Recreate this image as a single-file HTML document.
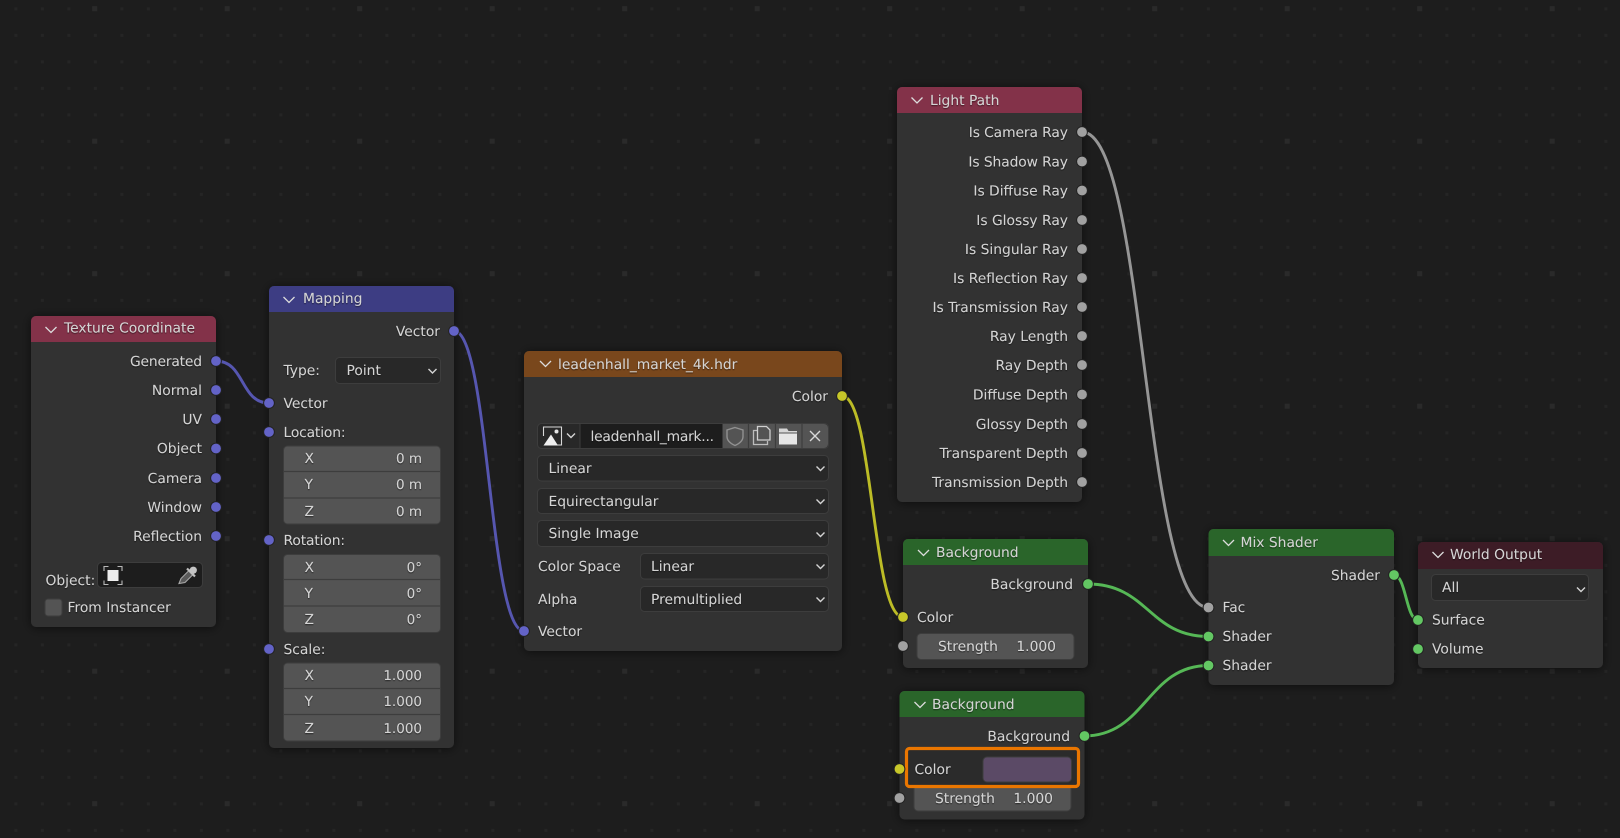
<!DOCTYPE html>
<html><head><meta charset="utf-8"><title>Shader nodes</title>
<style>
html,body{margin:0;padding:0;background:#1d1d1d;width:1620px;height:838px;overflow:hidden}
svg{display:block;position:absolute;left:0;top:0}
text{font-family:"DejaVu Sans","Liberation Sans",sans-serif;font-size:13.85px;fill:#d4d4d4;text-rendering:geometricPrecision}
.e{text-anchor:end}
.m{font-size:13.5px}
.n{filter:url(#sh)}
.b{fill:#303030}
.f{fill:#545454;stroke:#3d3d3d;stroke-width:1}
.d{fill:#282828;stroke:#3d3d3d;stroke-width:1}
.l{stroke:#3d3d3d;stroke-width:1.2;fill:none}
.c{fill:none;stroke:#dcdcdc;stroke-width:1.3}
.c2{fill:none;stroke:#d4d4d4;stroke-width:1.4}
.w{fill:none;stroke-width:2.9}
.v{fill:#6363c7;stroke:#222;stroke-width:1}
.y{fill:#c7c729;stroke:#222;stroke-width:1}
.g{fill:#63c763;stroke:#222;stroke-width:1}
.a{fill:#a1a1a1;stroke:#222;stroke-width:1}
</style></head><body>
<svg width="1620" height="838" viewBox="0 0 1620 838" xmlns="http://www.w3.org/2000/svg">
<defs>
<filter id="sh" x="-20%" y="-20%" width="140%" height="140%"><feDropShadow dx="0" dy="1" stdDeviation="5" flood-color="#000" flood-opacity=".55"/></filter>
<filter id="ts" x="-5%" y="-5%" width="110%" height="110%"><feDropShadow dx="0" dy="1" stdDeviation=".6" flood-color="#000" flood-opacity=".55"/></filter>
<pattern id="s" patternUnits="userSpaceOnUse" width="26.5" height="26.5" patternTransform="translate(14.4 7.4)"><rect x="0" y="0" width="3" height="3" fill="#252525"/></pattern>
<pattern id="L" patternUnits="userSpaceOnUse" width="132.5" height="132.5" patternTransform="translate(92.2 6.2)"><rect x="0" y="0" width="5" height="5" fill="#2a2a2a"/></pattern>
</defs>
<rect width="1620" height="838" fill="#1d1d1d"/>
<rect width="1620" height="838" fill="url(#s)"/>
<rect width="1620" height="838" fill="url(#L)"/>

<!-- nodes -->
<g class="n"><rect class="b" x="31" y="316" width="185" height="311" rx="5"/><path fill="#83314a" d="M31 342V321a5 5 0 0 1 5-5H211a5 5 0 0 1 5 5V342Z"/></g>
<g class="n"><rect class="b" x="269" y="286" width="185" height="462" rx="5"/><path fill="#3c3c83" d="M269 312V291a5 5 0 0 1 5-5H449a5 5 0 0 1 5 5V312Z"/></g>
<g class="n"><rect class="b" x="524" y="351" width="318" height="300" rx="5"/><path fill="#79461d" d="M524 377V356a5 5 0 0 1 5-5H837a5 5 0 0 1 5 5V377Z"/></g>
<g class="n"><rect class="b" x="897" y="87" width="185" height="415" rx="5"/><path fill="#83314a" d="M897 113V92a5 5 0 0 1 5-5H1077a5 5 0 0 1 5 5V113Z"/></g>
<g class="n"><rect class="b" x="903" y="539" width="185" height="129" rx="5"/><path fill="#2b652b" d="M903 565V544a5 5 0 0 1 5-5H1083a5 5 0 0 1 5 5V565Z"/></g>
<g class="n"><rect class="b" x="899.500" y="691" width="185" height="128.500" rx="5"/><path fill="#2b652b" d="M899.500 717V696a5 5 0 0 1 5-5H1079.500a5 5 0 0 1 5 5V717Z"/></g>
<g class="n"><rect class="b" x="1208.500" y="529" width="185.500" height="156" rx="5"/><path fill="#2b652b" d="M1208.500 556V534a5 5 0 0 1 5-5H1389a5 5 0 0 1 5 5V556Z"/></g>
<g class="n"><rect class="b" x="1418" y="542" width="185" height="126" rx="5"/><path fill="#3c1d26" d="M1418 569V547a5 5 0 0 1 5-5H1598a5 5 0 0 1 5 5V569Z"/></g>

<!-- wires -->
<g class="w">
<path stroke="#5656b0" d="M216 361C245 361 240 403 269 403"/>
<path stroke="#5656b0" d="M454 331C489 331 489 631 524 631"/>
<path stroke="#bcbc26" d="M842 396C873 396 872 617 903 617"/>
<path stroke="#969696" d="M1082 132C1146 132 1143 607.500 1208.500 607.500"/>
<path stroke="#56b856" d="M1088 584C1148 584 1149 636.500 1208.500 636.500"/>
<path stroke="#56b856" d="M1084 736C1146 736 1147 665.500 1208.500 665.500"/>
<path stroke="#56b856" d="M1394 575C1406 575 1406 620 1418 620"/>
</g>

<!-- fields -->
<rect class="d" x="335.500" y="357.500" width="105" height="26" rx="4"/>
<rect class="f" x="283.500" y="446" width="157" height="78" rx="4"/><path class="l" d="M283 471.500H441M283 498H441"/>
<rect class="f" x="283.500" y="554.500" width="157" height="78" rx="4"/><path class="l" d="M283 579.500H441M283 606H441"/>
<rect class="f" x="283.500" y="663" width="157" height="78" rx="4"/><path class="l" d="M283 688.500H441M283 714.500H441"/>
<rect class="d" x="97.500" y="562.500" width="105" height="25" rx="4" style="fill:#1d1d1d"/>
<rect class="f" x="45" y="599" width="17" height="17" rx="3"/>

<!-- image row -->
<rect x="537.500" y="423.500" width="291" height="25" rx="4" fill="#282828" stroke="#3d3d3d"/>
<rect x="580" y="424" width="143" height="24" fill="#1d1d1d"/>
<path d="M580 424V448" stroke="#3d3d3d"/>
<path d="M722.500 424H824a4 4 0 0 1 4 4V444a4 4 0 0 1-4 4H722.500Z" fill="#545454"/>
<path d="M748.500 424V448M775.500 424V448M802 424V448" stroke="#3d3d3d" stroke-width="1.2"/>
<rect class="d" x="537.500" y="455.500" width="291" height="25.500" rx="4"/>
<rect class="d" x="537.500" y="488.500" width="291" height="25" rx="4"/>
<rect class="d" x="537.500" y="520.500" width="291" height="26" rx="4"/>
<rect class="d" x="640.500" y="553.500" width="188" height="25.500" rx="4"/>
<rect class="d" x="640.500" y="586.500" width="188" height="25" rx="4"/>

<rect class="f" x="917" y="633.500" width="157" height="26" rx="4"/>
<rect class="f" x="914" y="785" width="157" height="26" rx="4"/>
<rect class="d" x="1431.500" y="574.500" width="157" height="26" rx="4"/>

<!-- orange highlight -->
<rect x="906.500" y="748.500" width="172" height="38" rx="3" fill="#2b2b2b" stroke="#ea7600" stroke-width="3.2"/>
<rect x="983" y="757" width="88.500" height="25" rx="4" fill="#5b4a66" stroke="#3d3d3d"/>

<!-- icons -->
<path class="c" d="M45.500 327l5.500 5.500 5.500-5.500M283.500 297l5.500 5.500 5.500-5.500M540 361l5.500 5.500 5.500-5.500M911.500 97.500l5.500 5.500 5.500-5.500M918 550l5.500 5.500 5.500-5.500M914.500 702l5.500 5.500 5.500-5.500M1223 540l5.500 5.500 5.500-5.500M1432.500 552l5.500 5.500 5.500-5.500"/>
<path class="c2" d="M428.500 369l4 4 4-4M567 433.500l4 4 4-4M816.500 466.500l4 4 4-4M816.500 499.500l4 4 4-4M816.500 532.500l4 4 4-4M816.500 564.500l4 4 4-4M816.500 597.500l4 4 4-4M1577 587.500l4 4 4-4"/>
<!-- object picker -->
<rect x="107.500" y="570" width="11" height="11" fill="#eee"/>
<path d="M104 571v-4.500h4.500M117.500 566.500h4.500v4.500M122 580.500v4h-4.500M108.500 584.500h-4.500v-4" fill="none" stroke="#b8b8b8" stroke-width="1.100"/>
<!-- eyedropper -->
<path d="M179 583.500L181 578.500L189.500 570L193.500 574L185 582.500Z" fill="#5a5a5a" stroke="#a8a8a8" stroke-width="1.100"/>
<path d="M187 568.500l8 8" stroke="#c0c0c0" stroke-width="2.200"/>
<circle cx="193.300" cy="570.200" r="3.600" fill="#c4c4c4"/>
<!-- image icon -->
<path d="M543.500 436v-9h18v18h-8M543.500 427v5" fill="none" stroke="#d8d8d8" stroke-width="1.100"/>
<path d="M543.500 445.500l7.500-11 7 11Z" fill="#eee"/>
<circle cx="556.500" cy="431.500" r="2" fill="#e4e4e4"/>
<!-- shield -->
<path d="M735 427.500l8 2.500v6.500c0 4-3.500 7-8 9-4.500-2-8-5-8-9V430Z" fill="none" stroke="#919191" stroke-width="1.400"/>
<!-- copy -->
<path d="M757 430.500h-3.500v14h14v-3.500" fill="none" stroke="#bdbdbd" stroke-width="1.300"/>
<path d="M757.500 426.500h9l3.500 3.500v10h-12.500Z" fill="none" stroke="#d0d0d0" stroke-width="1.300"/>
<!-- folder -->
<path d="M779 428.500h8l1.500 2.500h8.500v1.500h-18Z" fill="#d6d6d6"/>
<rect x="779" y="433.500" width="18" height="11" fill="#e6e6e6"/>
<!-- x -->
<path d="M810 431l10 10M820 431l-10 10" stroke="#d8d8d8" stroke-width="1.400"/>

<!-- sockets -->
<circle class="v" cx="216" cy="361" r="5.400"/><circle class="v" cx="216" cy="390" r="5.400"/><circle class="v" cx="216" cy="419" r="5.400"/><circle class="v" cx="216" cy="448.500" r="5.400"/><circle class="v" cx="216" cy="478" r="5.400"/><circle class="v" cx="216" cy="507" r="5.400"/><circle class="v" cx="216" cy="536" r="5.400"/>
<circle class="v" cx="454" cy="331" r="5.400"/><circle class="v" cx="269" cy="403" r="5.400"/><circle class="v" cx="269" cy="432" r="5.400"/><circle class="v" cx="269" cy="540" r="5.400"/><circle class="v" cx="269" cy="649" r="5.400"/>
<circle class="y" cx="842" cy="396" r="5.400"/><circle class="v" cx="524" cy="631" r="5.400"/>
<circle class="a" cx="1082" cy="132" r="5.400"/><circle class="a" cx="1082" cy="161.500" r="5.400"/><circle class="a" cx="1082" cy="190.500" r="5.400"/><circle class="a" cx="1082" cy="220" r="5.400"/><circle class="a" cx="1082" cy="249" r="5.400"/><circle class="a" cx="1082" cy="278" r="5.400"/><circle class="a" cx="1082" cy="307" r="5.400"/><circle class="a" cx="1082" cy="336" r="5.400"/><circle class="a" cx="1082" cy="365" r="5.400"/><circle class="a" cx="1082" cy="394.500" r="5.400"/><circle class="a" cx="1082" cy="424" r="5.400"/><circle class="a" cx="1082" cy="453" r="5.400"/><circle class="a" cx="1082" cy="482" r="5.400"/>
<circle class="g" cx="1088" cy="584" r="5.400"/><circle class="y" cx="903" cy="617" r="5.400"/><circle class="a" cx="903" cy="646" r="5.400"/>
<circle class="g" cx="1084.500" cy="736" r="5.400"/><circle class="y" cx="899.500" cy="769" r="5.400"/><circle class="a" cx="899.500" cy="798" r="5.400"/>
<circle class="g" cx="1394" cy="575" r="5.400"/><circle class="a" cx="1208.500" cy="607.500" r="5.400"/><circle class="g" cx="1208.500" cy="636.500" r="5.400"/><circle class="g" cx="1208.500" cy="665.500" r="5.400"/>
<circle class="g" cx="1418" cy="620" r="5.400"/><circle class="g" cx="1418" cy="649" r="5.400"/>

<!-- text -->
<g filter="url(#ts)">
<text x="64" y="332.500">Texture Coordinate</text>
<text class="e" x="202" y="366" textLength="72">Generated</text><text class="e" x="202" y="395">Normal</text><text class="e" x="202" y="424">UV</text><text class="e" x="202" y="453">Object</text><text class="e" x="202" y="483">Camera</text><text class="e" x="202" y="512">Window</text><text class="e" x="202" y="541">Reflection</text>
<text x="45.500" y="585">Object:</text><text x="67.500" y="612">From Instancer</text>

<text x="303" y="303">Mapping</text>
<text class="e" x="440" y="336">Vector</text>
<text x="283.500" y="375">Type:</text><text x="346.500" y="375">Point</text>
<text x="283.500" y="408">Vector</text><text x="283.500" y="437" textLength="62">Location:</text><text x="283.500" y="545" textLength="61.500">Rotation:</text><text x="283.500" y="654">Scale:</text>
<text x="304.500" y="463">X</text><text x="304.500" y="489">Y</text><text x="304.500" y="516">Z</text>
<text class="e m" x="422" y="463">0 m</text><text class="e m" x="422" y="489">0 m</text><text class="e m" x="422" y="516">0 m</text>
<text x="304.500" y="572">X</text><text x="304.500" y="598">Y</text><text x="304.500" y="624">Z</text>
<text class="e m" x="422" y="572">0°</text><text class="e m" x="422" y="598">0°</text><text class="e m" x="422" y="624">0°</text>
<text x="304.500" y="680">X</text><text x="304.500" y="706">Y</text><text x="304.500" y="733">Z</text>
<text class="e m" x="422" y="680">1.000</text><text class="e m" x="422" y="706">1.000</text><text class="e m" x="422" y="733">1.000</text>

<text x="558" y="369">leadenhall_market_4k.hdr</text>
<text class="e" x="828" y="401">Color</text>
<text x="590.500" y="441" textLength="123.500">leadenhall_mark...</text>
<text x="548.500" y="473">Linear</text><text x="548.500" y="506">Equirectangular</text><text x="548.500" y="538">Single Image</text>
<text x="538" y="571">Color Space</text><text x="651" y="571">Linear</text>
<text x="538" y="604">Alpha</text><text x="651" y="604">Premultiplied</text>
<text x="538" y="636">Vector</text>

<text x="930" y="105">Light Path</text>
<text class="e" x="1068" y="137" textLength="99.300">Is Camera Ray</text><text class="e" x="1068" y="166.500" textLength="99.600">Is Shadow Ray</text><text class="e" x="1068" y="195.500">Is Diffuse Ray</text><text class="e" x="1068" y="225">Is Glossy Ray</text><text class="e" x="1068" y="254">Is Singular Ray</text><text class="e" x="1068" y="283">Is Reflection Ray</text><text class="e" x="1068" y="312">Is Transmission Ray</text><text class="e" x="1068" y="341">Ray Length</text><text class="e" x="1068" y="370">Ray Depth</text><text class="e" x="1068" y="399.500">Diffuse Depth</text><text class="e" x="1068" y="429">Glossy Depth</text><text class="e" x="1068" y="458">Transparent Depth</text><text class="e" x="1068" y="487">Transmission Depth</text>

<text x="936" y="557">Background</text><text class="e" x="1073" y="589">Background</text><text x="917" y="622">Color</text><text x="938" y="651">Strength</text><text class="e" x="1056" y="651">1.000</text>
<text x="932" y="709">Background</text><text class="e" x="1070" y="741">Background</text><text x="914.500" y="774">Color</text><text x="935" y="803">Strength</text><text class="e" x="1053" y="803">1.000</text>

<text x="1240.500" y="547">Mix Shader</text><text class="e" x="1380" y="580">Shader</text><text x="1222.500" y="612">Fac</text><text x="1222.500" y="641">Shader</text><text x="1222.500" y="670">Shader</text>

<text x="1450" y="559">World Output</text><text x="1442" y="592">All</text><text x="1432" y="624.500">Surface</text><text x="1432" y="653.500">Volume</text>
</g>
</svg>
</body></html>
